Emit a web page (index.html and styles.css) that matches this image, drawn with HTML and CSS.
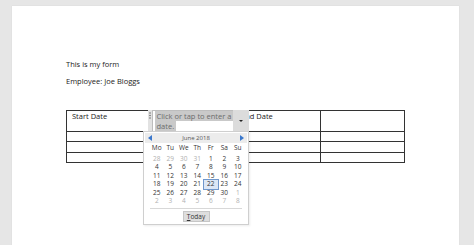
FILE: index.html
```html
<!DOCTYPE html>
<html>
<head>
<meta charset="utf-8">
<link rel="stylesheet" href="styles.css">
</head>
<body>
<div class="page">
  <p class="line">This is my form</p>
  <p class="line">Employee: Joe Bloggs</p>
  <div class="table-wrap">
    <table class="form-table">
      <tr class="r1">
        <td>Start Date</td>
        <td class="cc-cell"><span class="ph">Click or tap to enter a date.</span></td>
        <td>End Date</td>
        <td></td>
      </tr>
      <tr class="empty"><td></td><td></td><td></td><td></td></tr>
      <tr class="empty"><td></td><td></td><td></td><td></td></tr>
      <tr class="empty"><td></td><td></td><td></td><td></td></tr>
    </table>
    <div class="cc-frame"></div>
    <div class="cc-handle">
      <svg width="4" height="22" viewBox="0 0 4 22"><rect x="0" y="0" width="4" height="22" fill="#e2e2e2"/><circle cx="2" cy="3" r="0.7" fill="#555"/><circle cx="2" cy="5.5" r="0.7" fill="#555"/><circle cx="2" cy="8" r="0.7" fill="#555"/></svg>
    </div>
    <div class="cc-button"><span class="caret"></span></div>
    <div class="picker">
      <div class="pk-head">
        <span class="arr arr-left"></span>
        <span class="month">June 2018</span>
        <span class="arr arr-right"></span>
      </div>
      <div class="pk-grid dow">
        <span>Mo</span><span>Tu</span><span>We</span><span>Th</span><span>Fr</span><span>Sa</span><span>Su</span>
      </div>
      <div class="pk-grid days">
        <span class="other">28</span><span class="other">29</span><span class="other">30</span><span class="other">31</span><span>1</span><span>2</span><span>3</span>
        <span>4</span><span>5</span><span>6</span><span>7</span><span>8</span><span>9</span><span>10</span>
        <span>11</span><span>12</span><span>13</span><span>14</span><span>15</span><span>16</span><span>17</span>
        <span>18</span><span>19</span><span>20</span><span>21</span><span class="sel">22</span><span>23</span><span>24</span>
        <span>25</span><span>26</span><span>27</span><span>28</span><span>29</span><span>30</span><span class="other">1</span>
        <span class="other">2</span><span class="other">3</span><span class="other">4</span><span class="other">5</span><span class="other">6</span><span class="other">7</span><span class="other">8</span>
      </div>
      <div class="pk-sep"></div>
      <div class="pk-foot"><button class="today"><u>T</u>oday</button></div>
    </div>
  </div>
</div>
</body>
</html>
```
FILE: styles.css
```css
html, body {
  margin: 0;
  padding: 0;
}
body {
  background: #e6e6e6;
  width: 474px;
  height: 245px;
  overflow: hidden;
  font-family: "Open Sans", "Noto Sans", sans-serif;
  color: #222;
}
.page {
  margin: 6px 0 0 12px;
  width: 447px;
  height: 239px;
  background: #fff;
  box-sizing: border-box;
  padding: 53px 0 0 54px;
  box-shadow: 0 0 1px #cfcfcf;
}
.line {
  margin: 0 0 6.5px;
  font-size: 7.5px;
  line-height: 10px;
}
.table-wrap {
  position: relative;
  margin-top: 24px;
  width: 339px;
}
.form-table {
  border-collapse: collapse;
  table-layout: fixed;
  width: 339px;
  font-size: 7.5px;
  line-height: 10px;
}
.form-table td {
  border: 1px solid #333;
  padding: 0 0 0 5px;
  vertical-align: top;
  height: 9.5px;
}
.form-table .r1 td {
  height: 20px;
}
.form-table .cc-cell {
  padding-left: 3px;
}
.ph {
  background: #c9c9c9;
  color: #6c6c6c;
  padding: 0 2px;
  -webkit-box-decoration-break: clone;
  box-decoration-break: clone;
}
.cc-frame {
  position: absolute;
  left: 86px;
  top: 0;
  width: 81px;
  height: 21px;
  border: 1px solid #bdbdbd;
  border-right: none;
  pointer-events: none;
}
.cc-handle {
  position: absolute;
  left: 82px;
  top: 0;
  width: 4px;
  height: 22px;
  line-height: 0;
}
.cc-button {
  position: absolute;
  left: 167px;
  top: 0;
  width: 16px;
  height: 22px;
  background: #dcdcdc;
  display: flex;
  align-items: center;
  justify-content: center;
}
.caret {
  width: 0;
  height: 0;
  border-left: 2px solid transparent;
  border-right: 2px solid transparent;
  border-top: 2px solid #222;
  margin-top: 1px;
}
.picker {
  position: absolute;
  left: 77px;
  top: 21px;
  width: 106px;
  height: 94px;
  box-sizing: border-box;
  background: #fff;
  border: 1px solid #cfcfcf;
  padding: 1px 1px 0;
  box-shadow: 1px 1px 2px rgba(0, 0, 0, 0.08);
  color: #333;
}
.pk-head {
  height: 10px;
  background: #ececec;
  display: flex;
  align-items: center;
  justify-content: space-between;
  padding: 0 3px;
}
.arr {
  width: 0;
  height: 0;
  border-top: 3px solid transparent;
  border-bottom: 3px solid transparent;
}
.arr-left {
  border-right: 4px solid #3b78cc;
}
.arr-right {
  border-left: 4px solid #3b78cc;
}
.month {
  font-size: 6px;
  line-height: 10px;
  color: #555;
}
.pk-grid {
  display: grid;
  grid-template-columns: repeat(7, 13.5px);
  padding-left: 5px;
  text-align: center;
}
.dow {
  height: 10px;
  font-size: 6.5px;
  line-height: 10px;
  color: #333;
}
.days {
  margin-top: 2px;
  grid-auto-rows: 8.5px;
  font-size: 6.5px;
  line-height: 8.5px;
  color: #333;
}
.days .other {
  color: #b0b0b0;
}
.days .sel {
  background: #dce7f5;
  outline: 1px solid #6f97cc;
}
.pk-sep {
  margin: 2px 5px 0 5px;
  border-top: 1px solid #d8d8d8;
}
.pk-foot {
  display: flex;
  justify-content: center;
}
.today {
  margin-top: 2px;
  width: 27px;
  height: 11px;
  padding: 0;
  background: #dedede;
  border: 1px solid #c6c6c6;
  font-family: "Open Sans", "Noto Sans", sans-serif;
  font-size: 6.5px;
  line-height: 9px;
  color: #333;
}
```
